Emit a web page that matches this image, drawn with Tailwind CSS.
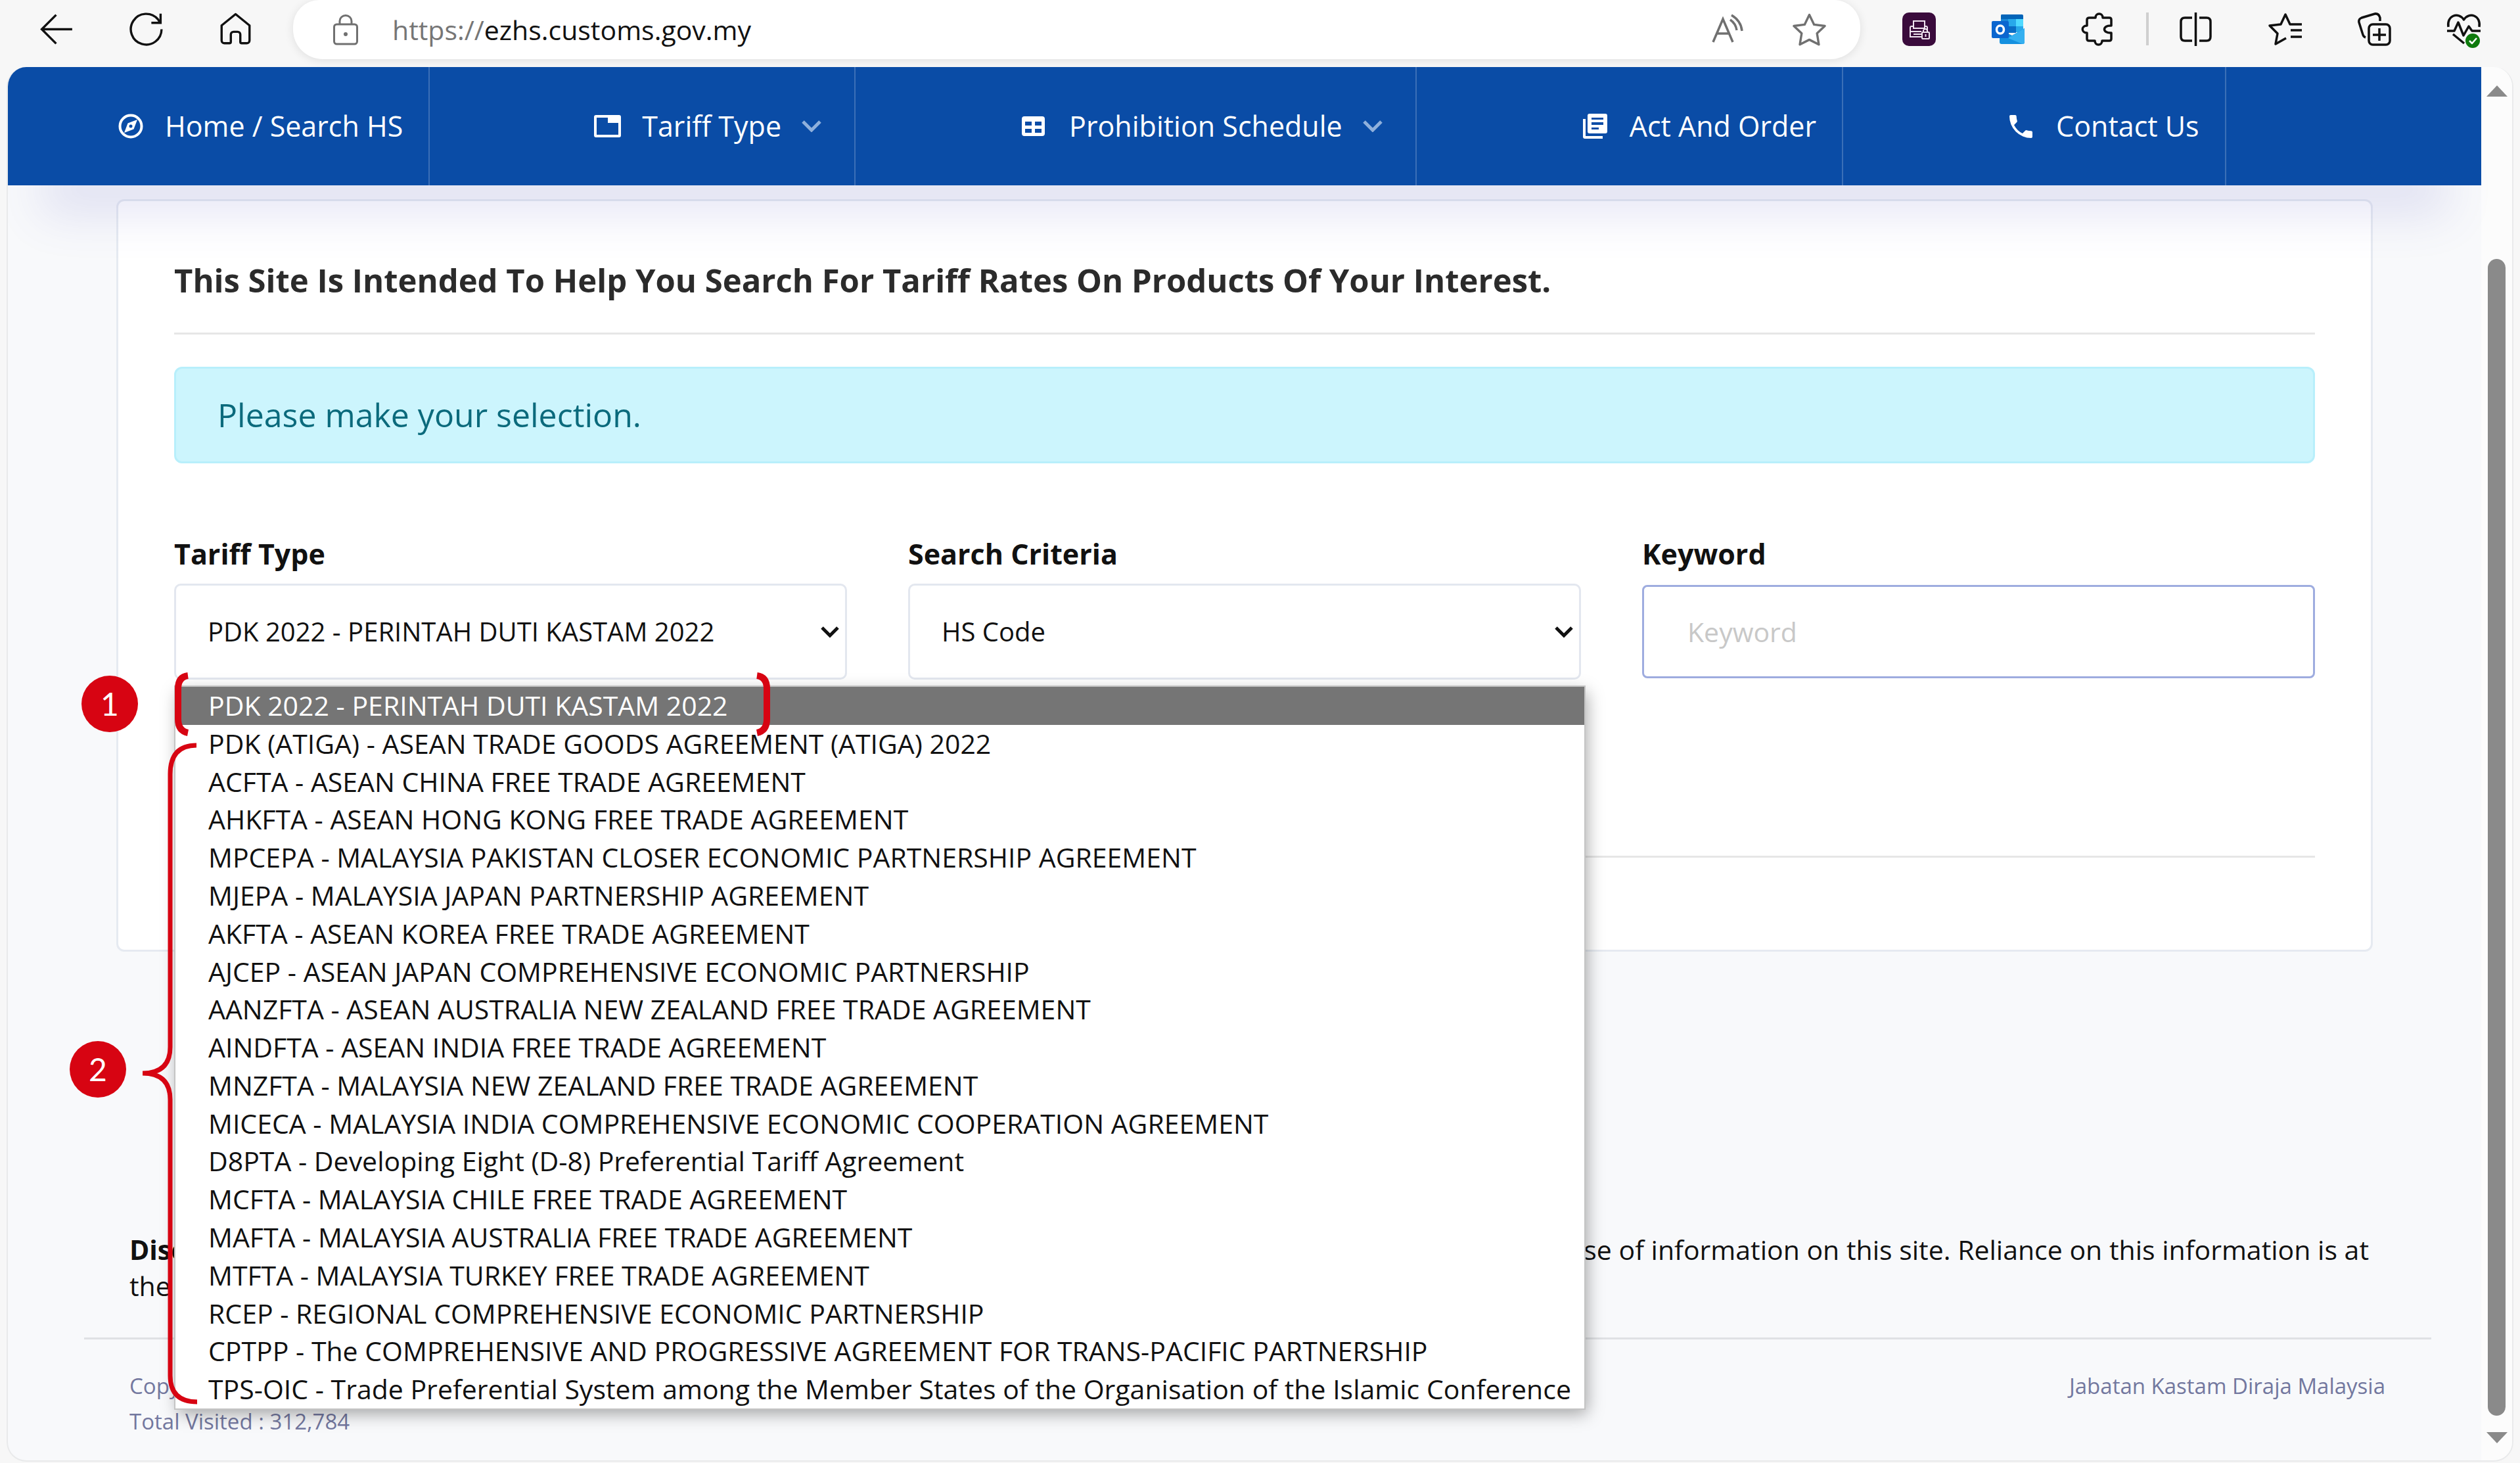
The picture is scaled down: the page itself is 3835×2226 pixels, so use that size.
<!DOCTYPE html>
<html lang="en">
<head>
    <meta charset="UTF-8">
    <meta name="viewport" content="width=device-width, initial-scale=1.0">
    <title>ezHS - Home / Search HS</title>
    <script src="https://cdn.jsdelivr.net/npm/@tailwindcss/browser@4"></script>
</head>
<body class="min-h-screen flex flex-col bg-[#f7f7f7] font-['Open_Sans',sans-serif] text-[#111]">

    <!-- Browser toolbar -->
    <header class="h-[102px] shrink-0 flex items-start pl-[61px] pr-[60px]">
        <div class="h-[88px] flex items-center gap-[85px] text-[#111]">
            <button aria-label="Back"><svg class="size-[51px]" viewBox="0 0 24 24" fill="none" stroke="currentColor" stroke-width="1.6"><path d="M23 12H1.5M11.5 1.7 1.2 12l10.3 10.3"/></svg></button>
            <button aria-label="Refresh"><svg class="size-[51px]" viewBox="0 0 24 24" fill="none" stroke="currentColor" stroke-width="1.6"><path d="M23 12a11 11 0 1 1-2.6-7.1L22 7.3M22.3.8v6.6h-6.6"/></svg></button>
            <button aria-label="Home"><svg class="size-[51px]" viewBox="0 0 24 24" fill="none" stroke="currentColor" stroke-width="1.6" stroke-linejoin="round"><path d="M2 9.3 12 1.2l10 8.1V20a2 2 0 0 1-2 2h-3.6a1 1 0 0 1-1-1v-5.2a2 2 0 0 0-2-2h-2.8a2 2 0 0 0-2 2V21a1 1 0 0 1-1 1H4a2 2 0 0 1-2-2Z"/></svg></button>
        </div>
        <div class="flex-1 h-[90px] ml-[62px] mr-[64px] pl-[61px] pr-[52px] flex items-center bg-white rounded-b-[45px] rounded-t-[40px] shadow-[0_2px_14px_rgba(0,0,0,0.10)]">
            <svg class="w-[38px] h-[47px] text-[#707070]" viewBox="0 0 38 47" fill="none" stroke="currentColor" stroke-width="3"><rect x="1.5" y="15" width="35" height="30" rx="4"/><path d="M10 15V10a9 8.5 0 0 1 18 0v5"/><circle cx="19" cy="30" r="3" fill="currentColor" stroke="none"/></svg>
            <span class="ml-[52px] text-[41px] leading-[80px] text-[#767676]">https://</span>
            <input aria-label="Address" class="flex-1 min-w-0 text-[41px] leading-[80px] text-[#111] outline-none" value="ezhs.customs.gov.my">
            <button aria-label="Read aloud" class="mr-[72px] text-[#707070]"><svg class="size-[51px]" viewBox="0 0 51 51" fill="none" stroke="currentColor" stroke-width="3.5"><path d="M2 44 17 9l15 35M8 31h18M28 10c6 4 9 9 10 16M30 3c10 6 15 13 16 24"/></svg></button>
            <button aria-label="Add to favourites" class="text-[#707070]"><svg class="size-[51px]" viewBox="0 0 24 24" fill="none" stroke="currentColor" stroke-width="1.6" stroke-linejoin="round"><path d="m12 1.200 3.400 7 7.700 1-5.600 5.300 1.300 8L12 19l-6.800 3.500 1.300-8L.9 9.200l7.700-1Z"/></svg></button>
        </div>
        <div class="h-[88px] flex items-center">
            <button aria-label="Printer extension"><svg class="size-[51px]" viewBox="0 0 51 51"><rect width="51" height="51" rx="10" fill="#3a0b3c"/><g fill="none" stroke="#efe4f0" stroke-width="2"><path d="M17 24V13h17v11Z"/><path d="M17 21h-3q-2 0-2 2v14h18M34 21h2q2 0 2 2v4M13 29h16M17 33h13"/><rect x="30" y="30" width="11" height="10" rx="1"/><path d="M32 30v-3q3-4 6 0v3M35.500 33v4"/></g></svg></button>
            <button aria-label="Outlook" class="ml-[85px]"><svg class="size-[51px]" viewBox="0 0 51 51"><path d="M15 3h31q2 0 2 2v5H14V5q0-2 1-2Z" fill="#0364b8"/><path d="M25 10h12v11H25Z" fill="#28a8ea"/><path d="M37 10h11v20H37Z" fill="#50d9ff"/><path d="M14 10h11v11H14Z" fill="#1a86d8"/><path d="M25 21h12v10H25Z" fill="#0a6cc4"/><path d="M37 21h11v9H37Z" fill="#28a8ea"/><path d="M12 26 31 35l19-11v21q0 3-3 3H15q-3 0-3-3Z" fill="#1490df"/><path d="m50 24-25 15 22 9q3 0 3-3Z" fill="#35b0f0"/><rect x="0" y="13" width="26" height="26" rx="2" fill="#0b66cf"/><ellipse cx="13" cy="26" rx="5.500" ry="6" fill="none" stroke="#fff" stroke-width="3.500"/></svg></button>
            <button aria-label="Extensions" class="ml-[85px]"><svg class="size-[51px]" viewBox="0 0 51 51" fill="none" stroke="currentColor" stroke-width="3.5" stroke-linejoin="round"><path d="M13 8h9c0-8 11-8 11 0h10q3 0 3 3v9c-14-1-14 12 0 11v9q0 3-3 3H32c0 8-11 8-11 0h-9q-3 0-3-3v-9c-9 0-9-11 0-11v-9q0-3 4-3Z"/></svg></button>
            <span class="w-1 h-[50px] ml-[48px] bg-[#cfcfcf]"></span>
            <button aria-label="Split screen" class="ml-[46px]"><svg class="size-[51px]" viewBox="0 0 51 51" fill="none" stroke="currentColor" stroke-width="3.5"><path d="M25.500 0v51M20 8H9q-6 0-6 6v23q0 6 6 6h11M31 8h11q6 0 6 6v23q0 6-6 6H31"/></svg></button>
            <button aria-label="Favourites" class="ml-[85px]"><svg class="size-[51px]" viewBox="0 0 51 51" fill="none" stroke="currentColor" stroke-width="3.5" stroke-linejoin="round"><path d="M51 18H33l-7-15-7 15-17 2 12 12-3 16 16-9M34 27h17M34 37h17"/></svg></button>
            <button aria-label="Collections" class="ml-[85px]"><svg class="size-[51px]" viewBox="0 0 51 51" fill="none" stroke="currentColor" stroke-width="3.5"><rect x="17" y="18" width="32" height="31" rx="6"/><path d="M33 24v19M23 34h20M12 38q-3-1-4-4L2 15q-1-5 4-7l20-6q6-1 8 6v5"/></svg></button>
            <button aria-label="Browser essentials" class="ml-[85px]"><svg class="size-[51px] overflow-visible" viewBox="0 0 51 51" fill="none" stroke="currentColor" stroke-width="3.5" stroke-linejoin="round"><path d="M2 22C-1 5 17-2 25.500 11 34-2 52 5 49 22M0 28h11l6-13 8 20 8-14 5 7h13M9 33l17 14"/><circle cx="39" cy="43" r="11" fill="#0e7a0d" stroke="none"/><path d="m34 43 4 4 7-8" stroke="#fff" stroke-width="2.5"/></svg></button>
        </div>
    </header>

    <!-- Page viewport -->
    <div class="flex-1 flex mx-[10px] mb-[2px] border-2 border-[#e9eaeb] border-t-0 rounded-[30px] overflow-hidden bg-[#f8f9fb]">
        <div class="flex-1 min-w-0">

            <nav class="relative z-10 h-[180px] flex bg-[#0a4ca6] text-white text-[43px] shadow-[0_96px_70px_-50px_rgba(85,85,190,0.14)]">
                <a href="#" class="flex items-center pl-[168px] pr-[39px] border-r-2 border-white/20">
                    <svg class="size-[38px] mr-[33px]" viewBox="0 0 38 38"><circle cx="19" cy="19" r="16.500" fill="none" stroke="#fff" stroke-width="4"/><path fill="#fff" fill-rule="evenodd" d="m29 9-5.500 14.500L9 29l5.500-14.500ZM19 16.500a2.500 2.500 0 1 0 0 5 2.500 2.500 0 0 0 0-5Z"/></svg>Home / Search HS
                </a>
                <a href="#" class="flex items-center pl-[250px] pr-[50px] border-r-2 border-white/20">
                    <svg class="w-[41px] h-[34px] mr-[32px]" viewBox="0 0 41 34"><path fill="#fff" fill-rule="evenodd" d="M3 0h35q3 0 3 3v28q0 3-3 3H3q-3 0-3-3V3q0-3 3-3Zm1 4v26h33V12H21V4Z"/></svg>Tariff Type
                    <svg class="w-[30px] h-[18px] ml-[31px]" viewBox="0 0 30 18" fill="none" stroke="#8fb0dc" stroke-width="5"><path d="m2 2 13 13L28 2"/></svg>
                </a>
                <a href="#" class="flex items-center pl-[253px] pr-[50px] border-r-2 border-white/20">
                    <svg class="w-[35px] h-[30px] mr-[37px]" viewBox="0 0 35 30"><path fill="#fff" fill-rule="evenodd" d="M4 0h27q4 0 4 4v22q0 4-4 4H4q-4 0-4-4V4q0-4 4-4Zm1 8v6h10V8Zm15 0v6h10V8ZM5 19v6h10v-6Zm15 0v6h10v-6Z"/></svg>Prohibition Schedule
                    <svg class="w-[30px] h-[18px] ml-[31px]" viewBox="0 0 30 18" fill="none" stroke="#8fb0dc" stroke-width="5"><path d="m2 2 13 13L28 2"/></svg>
                </a>
                <a href="#" class="flex items-center pl-[253px] pr-[39px] border-r-2 border-white/20">
                    <svg class="w-[37px] h-[38px] mr-[34px]" viewBox="0 0 37 38"><path d="M0 8h4v26h26v4H3q-3 0-3-3Z" fill="#fff"/><path fill="#fff" fill-rule="evenodd" d="M10 0h24q3 0 3 3v24q0 3-3 3H10q-3 0-3-3V3q0-3 3-3Zm3 6v3h18V6Zm0 7v4h18v-4Zm0 8v3h11v-3Z"/></svg>Act And Order
                </a>
                <a href="#" class="flex items-center pl-[253px] pr-[39px] border-r-2 border-white/20">
                    <svg class="size-[35px] mr-[36px]" viewBox="3 3 18 18" fill="#fff"><path d="M6.620 10.790a15.150 15.150 0 0 0 6.590 6.590l2.200-2.200c.28-.28.67-.36 1.020-.25 1.120.37 2.320.57 3.570.57a1 1 0 0 1 1 1V20a1 1 0 0 1-1 1A17 17 0 0 1 3 4a1 1 0 0 1 1-1h3.500a1 1 0 0 1 1 1c0 1.250.2 2.450.57 3.570.11.35.03.74-.25 1.020Z"/></svg>Contact Us
                </a>
            </nav>

            <main class="mx-[165px] mt-[21px] px-[85px] pt-[88px] pb-[140px] bg-white border-3 border-[#e6eaf1] rounded-[12px]">
                <h1 class="text-[49px] leading-[64px] font-bold text-[#2b2b2b]">This Site Is Intended To Help You Search For Tariff Rates On Products Of Your Interest.</h1>
                <hr class="mt-[48px] border-t-3 border-[#e6e6e6]">
                <div class="mt-[49px] h-[147px] flex items-center px-[63px] rounded-[12px] border-3 border-[#b8effb] bg-[#ccf5fd] text-[50px] text-[#0b6a7c]">Please make your selection.</div>

                <form class="mt-[108px] grid grid-cols-3 gap-[93px]">
                    <div>
                        <label for="tariff" class="block text-[43px] leading-[60px] font-bold">Tariff Type</label>
                        <div class="relative mt-[15px]">
                            <select id="tariff" class="appearance-none w-full h-[146px] pl-[48px] bg-white border-3 border-[#e3e7ef] rounded-[10px] text-[40px]">
                                <option>PDK 2022 - PERINTAH DUTI KASTAM 2022</option>
                            </select>
                            <svg class="absolute right-[12px] top-[65px] w-[28px] h-[18px]" viewBox="0 0 28 18" fill="none" stroke="#111" stroke-width="5"><path d="m2 2 12 12L26 2"/></svg>

                            <!-- Open option list -->
                            <ul role="listbox" aria-label="Tariff Type" class="absolute z-20 left-[2px] top-[157px] w-[2144px] h-[1098px] grid auto-rows-fr bg-white text-[41px] leading-[56px] whitespace-nowrap outline-2 outline-[#c4c4c4] shadow-[4px_8px_24px_rgba(0,0,0,0.35)] *:pl-[50px]">
                                <li role="option" aria-selected="true" class="bg-[#757575] text-white">PDK 2022 - PERINTAH DUTI KASTAM 2022</li>
                                <li role="option">PDK (ATIGA) - ASEAN TRADE GOODS AGREEMENT (ATIGA) 2022</li>
                                <li role="option">ACFTA - ASEAN CHINA FREE TRADE AGREEMENT</li>
                                <li role="option">AHKFTA - ASEAN HONG KONG FREE TRADE AGREEMENT</li>
                                <li role="option">MPCEPA - MALAYSIA PAKISTAN CLOSER ECONOMIC PARTNERSHIP AGREEMENT</li>
                                <li role="option">MJEPA - MALAYSIA JAPAN PARTNERSHIP AGREEMENT</li>
                                <li role="option">AKFTA - ASEAN KOREA FREE TRADE AGREEMENT</li>
                                <li role="option">AJCEP - ASEAN JAPAN COMPREHENSIVE ECONOMIC PARTNERSHIP</li>
                                <li role="option">AANZFTA - ASEAN AUSTRALIA NEW ZEALAND FREE TRADE AGREEMENT</li>
                                <li role="option">AINDFTA - ASEAN INDIA FREE TRADE AGREEMENT</li>
                                <li role="option">MNZFTA - MALAYSIA NEW ZEALAND FREE TRADE AGREEMENT</li>
                                <li role="option">MICECA - MALAYSIA INDIA COMPREHENSIVE ECONOMIC COOPERATION AGREEMENT</li>
                                <li role="option">D8PTA - Developing Eight (D-8) Preferential Tariff Agreement</li>
                                <li role="option">MCFTA - MALAYSIA CHILE FREE TRADE AGREEMENT</li>
                                <li role="option">MAFTA - MALAYSIA AUSTRALIA FREE TRADE AGREEMENT</li>
                                <li role="option">MTFTA - MALAYSIA TURKEY FREE TRADE AGREEMENT</li>
                                <li role="option">RCEP - REGIONAL COMPREHENSIVE ECONOMIC PARTNERSHIP</li>
                                <li role="option">CPTPP - The COMPREHENSIVE AND PROGRESSIVE AGREEMENT FOR TRANS-PACIFIC PARTNERSHIP</li>
                                <li role="option">TPS-OIC - Trade Preferential System among the Member States of the Organisation of the Islamic Conference</li>
                            </ul>

                            <!-- Red callouts -->
                            <svg class="absolute z-30 left-0 top-0 w-px h-px overflow-visible pointer-events-none" fill="none" stroke="#d70412">
                                <path stroke-width="10" d="M21 140Q6 142 6 160V206Q6 224 21 227M887 140Q902 142 902 160V206Q902 224 887 227"/>
                                <path stroke-width="7" d="M34 246Q-6 246-6 290V705Q-6 745-48 745Q-6 745-6 785V1205Q-6 1245 35 1245"/>
                            </svg>
                            <span class="absolute z-30 left-[-141px] top-[140px] size-[86px] rounded-full bg-[#d70412] text-white font-['Lato'] text-[48px] flex items-center justify-center">1</span>
                            <span class="absolute z-30 left-[-159px] top-[696px] size-[86px] rounded-full bg-[#d70412] text-white font-['Lato'] text-[48px] flex items-center justify-center">2</span>
                        </div>
                    </div>
                    <div>
                        <label for="criteria" class="block text-[43px] leading-[60px] font-bold">Search Criteria</label>
                        <div class="relative mt-[15px]">
                            <select id="criteria" class="appearance-none w-full h-[146px] pl-[48px] bg-white border-3 border-[#e3e7ef] rounded-[10px] text-[40px]">
                                <option>HS Code</option>
                            </select>
                            <svg class="absolute right-[12px] top-[65px] w-[28px] h-[18px]" viewBox="0 0 28 18" fill="none" stroke="#111" stroke-width="5"><path d="m2 2 12 12L26 2"/></svg>
                        </div>
                    </div>
                    <div>
                        <label for="keyword" class="block text-[43px] leading-[60px] font-bold">Keyword</label>
                        <div class="mt-[15px] h-[146px] flex items-center">
                            <input id="keyword" type="text" placeholder="Keyword" class="w-full h-[142px] px-[66px] bg-white border-3 border-[#9eacdf] rounded-[8px] text-[41px] placeholder:text-[#c8c8c8] outline-none">
                        </div>
                    </div>
                </form>
                <hr class="mt-[268px] border-t-3 border-[#e6e6e6]">
            </main>

            <footer class="mt-[426px] pl-[116px] pr-[76px]">
                <div class="px-[69px] text-[41px] leading-[55px] whitespace-nowrap">
                    <p class="flex justify-between pr-[26px]"><strong>Disclaimer</strong><span>use of information on this site. Reliance on this information is at</span></p>
                    <p>the user's risk.</p>
                </div>
                <hr class="mt-[51px] border-t-3 border-[#dfe1e4]">
                <div class="mt-[44px] pl-[69px] pr-[70px] flex justify-between text-[33px] leading-[54px] text-[#73789f]">
                    <p>Copyright<br>Total Visited : 312,784</p>
                    <p>Jabatan Kastam Diraja Malaysia</p>
                </div>
            </footer>
        </div>

        <!-- Scrollbar -->
        <div class="w-[47px] flex flex-col items-center bg-[#fcfcfc] pt-[28px] pb-[26px]" aria-hidden="true">
            <svg class="w-[32px] h-[17px]" viewBox="0 0 32 17"><path d="M0 17 16 0l16 17Z" fill="#8a8a8a"/></svg>
            <div class="flex-1 w-[27px] mt-[247px] mb-[25px] rounded-full bg-[#8a8a8a]"></div>
            <svg class="w-[32px] h-[17px]" viewBox="0 0 32 17"><path d="M0 0h32L16 17Z" fill="#8a8a8a"/></svg>
        </div>
    </div>
</body>
</html>
